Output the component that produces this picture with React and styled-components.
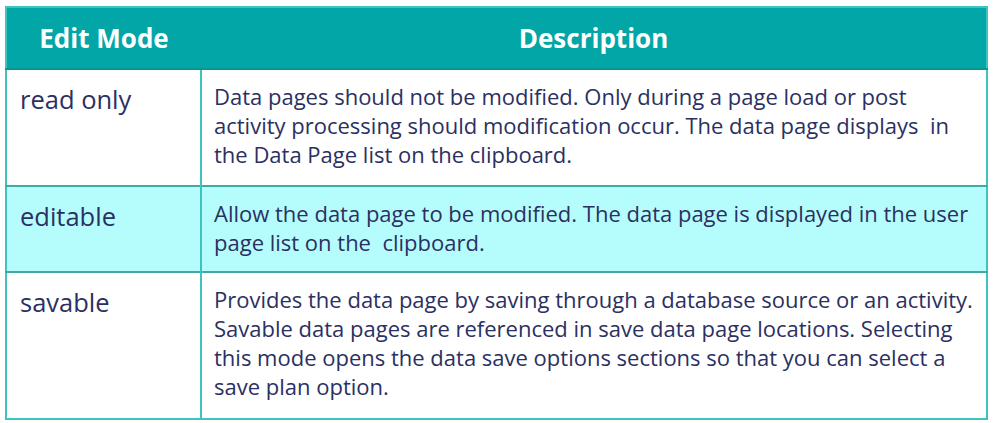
import React from 'react';
import styled, {createGlobalStyle} from 'styled-components';

const GlobalStyle = createGlobalStyle`
    body {
        margin: 0;
        background: #ffffff;
        font-family: "Open Sans", "Noto Sans", sans-serif;
    }
`;

const Page = styled.div`
    padding: 6px 0 0 5px;
`;

const Table = styled.table`
    width: 983px;
    border-collapse: collapse;
    border: 2px solid #3fc3c1;
    color: #2b3062;
`;

const HeadCell = styled.th`
    background: #02a6a6;
    color: #ffffff;
    font-size: 26px;
    font-weight: 700;
    height: 60px;
    padding: 0;
    text-align: center;
    border-bottom: 2px solid #079595;
    width: ${({wide}) => (wide ? 'auto' : '194px')};
`;

const Row = styled.tr`
    background: ${({highlight}) => (highlight ? '#b5fdfc' : '#ffffff')};
    border-top: 2px solid #44a9a6;
    &:first-child {
        border-top: none;
    }
`;

const ModeCell = styled.td`
    vertical-align: top;
    font-size: 25.5px;
    line-height: 30px;
    padding: 14px 10px 0 13px;
    border-right: 2px solid #3fc3c1;
`;

const DescCell = styled.td`
    vertical-align: top;
    font-size: 22px;
    line-height: 29px;
    padding: 12px 8px 0 12px;
    height: ${({h}) => h}px;
    box-sizing: border-box;
`;

const rows = [
    {
        mode: 'read only',
        h: 117,
        text: 'Data pages should not be modified. Only during a page load or post activity processing should modification occur. The data page displays \u00a0in the Data Page list on the clipboard.',
    },
    {
        mode: 'editable',
        h: 86,
        highlight: true,
        text: 'Allow the data page to be modified. The data page is displayed in the user page list on the \u00a0clipboard.',
    },
    {
        mode: 'savable',
        h: 147,
        text: 'Provides the data page by saving through a database source or an activity. Savable data pages are referenced in save data page locations. Selecting this mode opens the data save options sections so that you can select a save plan option.',
    },
];

export default function App() {
    return (
        <Page>
            <GlobalStyle/>
            <Table>
                <thead>
                    <tr>
                        <HeadCell>Edit Mode</HeadCell>
                        <HeadCell wide>Description</HeadCell>
                    </tr>
                </thead>
                <tbody>
                    {rows.map((r) => (
                        <Row key={r.mode} highlight={r.highlight}>
                            <ModeCell>{r.mode}</ModeCell>
                            <DescCell h={r.h}>{r.text}</DescCell>
                        </Row>
                    ))}
                </tbody>
            </Table>
        </Page>
    );
}
